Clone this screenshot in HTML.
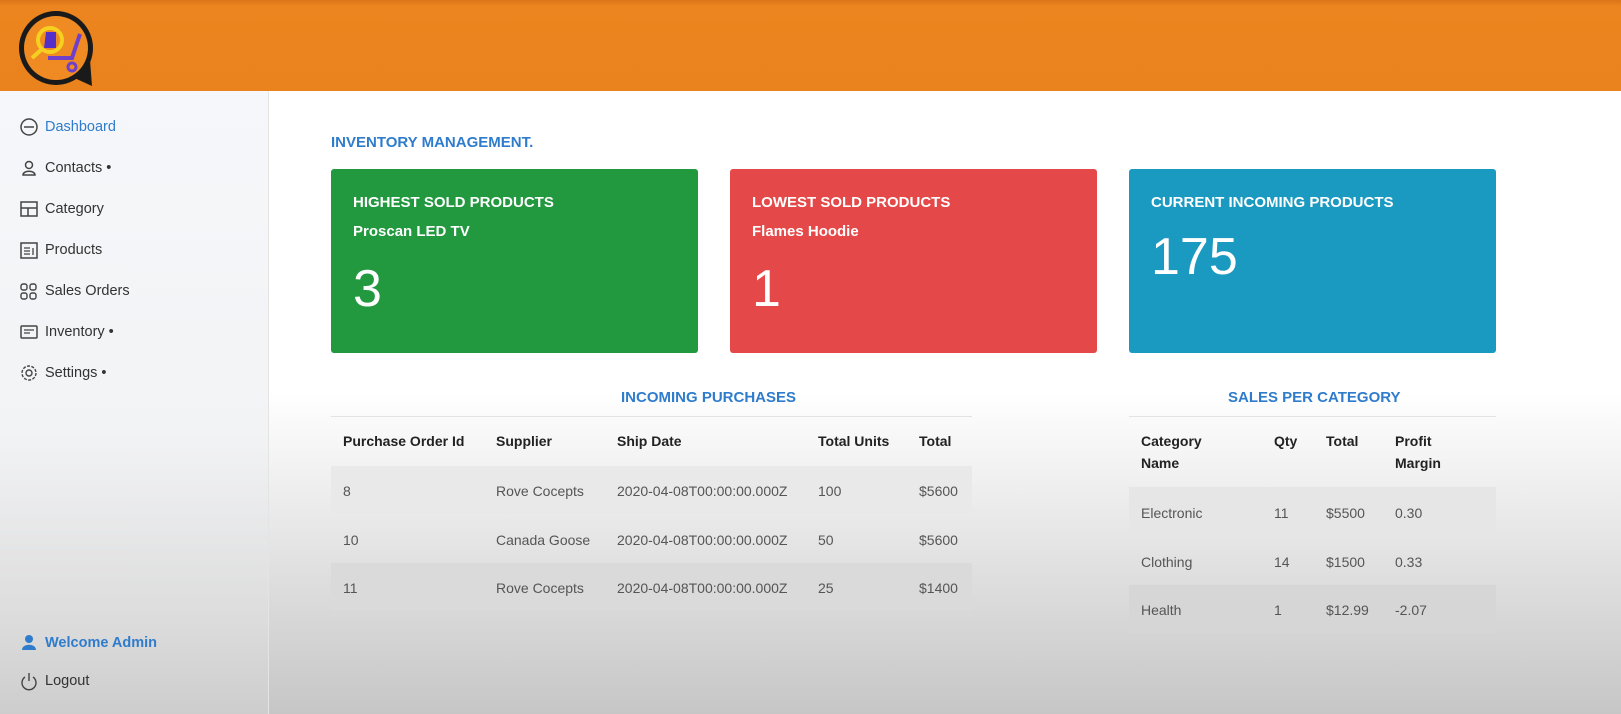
<!DOCTYPE html>
<html><head><meta charset="utf-8"><style>
*{margin:0;padding:0;box-sizing:border-box}
body{width:1621px;height:714px;overflow:hidden;font-family:"Liberation Sans",sans-serif;position:relative;background:linear-gradient(#fff 0%,#fff 55%,#e6e6e6 75%,#c6c6c6 100%)}
.hdr{position:absolute;left:0;top:0;width:1621px;height:91px;background:linear-gradient(#d97418 0,#ec841f 6px,#ea821d 100%)}
.side{position:absolute;left:0;top:91px;width:269px;height:623px;background:linear-gradient(#f5f7fa 0%,#f2f3f5 55%,#dcdcdc 85%,#cdcdcd 100%);border-right:1px solid #e4e4e4}
.nav{position:absolute;left:19px;font-size:14.5px;color:#333;display:flex;align-items:center;gap:6px}
.nav svg{width:20px;height:20px}
.t{position:absolute;font-size:14px;color:#222}
.card{position:absolute;top:169px;width:367px;height:184px;border-radius:3px;color:#fff}
.card .a{position:absolute;left:22px;top:25px;font-weight:bold;font-size:15px}
.card .b{position:absolute;left:22px;top:54px;font-weight:bold;font-size:15px}
.card .n{position:absolute;left:22px;font-size:52px;font-weight:300}
.row{position:absolute;height:48px}
.blue{color:#2f7ccc;font-weight:bold}
</style></head><body>
<div class="hdr">
<svg width="92" height="88" style="position:absolute;left:10px;top:4px" viewBox="0 0 92 88">
<path d="M60 72 L82 82 L80 56 Z" fill="#1a1a1a"/>
<circle cx="46" cy="44" r="37" fill="#1a1a1a"/>
<circle cx="46" cy="44" r="32" fill="#f08a22"/>
<circle cx="40" cy="36" r="12" fill="none" stroke="#f5d020" stroke-width="4"/>
<path d="M31 46 22 54" stroke="#f5d020" stroke-width="4"/>
<path d="M36 28h10v16h-12z" fill="#5530c8"/>
<path d="M38 54h24l8-24" stroke="#7040c8" stroke-width="4" fill="none"/>
<circle cx="62" cy="63" r="4" fill="none" stroke="#7040c8" stroke-width="3"/>
</svg>
</div>
<div class="side">
<div class="nav" style="top:26px;color:#2f7ccc"><svg viewBox="0 0 20 20"><circle cx="10" cy="10" r="8" fill="none" stroke="#444" stroke-width="1.5"/><path d="M5 10h10" stroke="#444" stroke-width="1.5"/></svg>Dashboard</div>
<div class="nav" style="top:67px"><svg viewBox="0 0 20 20"><circle cx="10" cy="7" r="3.5" fill="none" stroke="#444" stroke-width="1.5"/><path d="M4 17c0-5 12-5 12 0z" fill="none" stroke="#444" stroke-width="1.5"/></svg>Contacts •</div>
<div class="nav" style="top:108px"><svg viewBox="0 0 20 20"><rect x="2" y="3" width="16" height="14" fill="none" stroke="#444" stroke-width="1.5"/><path d="M2 9h16M9 9v8" stroke="#444" stroke-width="1.5"/></svg>Category</div>
<div class="nav" style="top:149px"><svg viewBox="0 0 20 20"><rect x="2" y="3" width="16" height="15" fill="none" stroke="#444" stroke-width="1.5"/><path d="M5 8h6M5 11h6M5 14h6M14 8v7" stroke="#444" stroke-width="1.3"/></svg>Products</div>
<div class="nav" style="top:190px"><svg viewBox="0 0 20 20"><rect x="2" y="3" width="6" height="6" rx="2" fill="none" stroke="#444" stroke-width="1.4"/><rect x="11" y="3" width="6" height="6" rx="2" fill="none" stroke="#444" stroke-width="1.4"/><rect x="2" y="12" width="6" height="6" rx="2" fill="none" stroke="#444" stroke-width="1.4"/><rect x="11" y="12" width="6" height="6" rx="2" fill="none" stroke="#444" stroke-width="1.4"/></svg>Sales Orders</div>
<div class="nav" style="top:231px"><svg viewBox="0 0 20 20"><rect x="2" y="4" width="16" height="12" rx="1" fill="none" stroke="#444" stroke-width="1.5"/><path d="M5 8h10M5 11h6" stroke="#444" stroke-width="1.3"/></svg>Inventory •</div>
<div class="nav" style="top:272px"><svg viewBox="0 0 20 20"><circle cx="10" cy="10" r="3" fill="none" stroke="#444" stroke-width="1.4"/><circle cx="10" cy="10" r="7" fill="none" stroke="#444" stroke-width="1.4" stroke-dasharray="3 1.4"/></svg>Settings •</div>
<div class="nav" style="top:542px;color:#2f7ccc;font-weight:bold"><svg viewBox="0 0 20 20"><circle cx="10" cy="6" r="4" fill="#2f7ccc"/><path d="M3 17c0-7 14-7 14 0z" fill="#2f7ccc"/></svg>Welcome Admin</div>
<div class="nav" style="top:580px"><svg viewBox="0 0 20 20"><path d="M6 6a7 7 0 1 0 8 0" fill="none" stroke="#444" stroke-width="1.4"/><path d="M10 2v8" stroke="#444" stroke-width="1.4"/></svg>Logout</div>
</div>

<div class="t blue" style="left:331px;top:134px;font-size:15px">INVENTORY MANAGEMENT.</div>
<div class="card" style="left:331px;background:#22983f"><div class="a">HIGHEST SOLD PRODUCTS</div><div class="b">Proscan LED TV</div><div class="n" style="top:90px">3</div></div>
<div class="card" style="left:730px;background:#e54848"><div class="a">LOWEST SOLD PRODUCTS</div><div class="b">Flames Hoodie</div><div class="n" style="top:90px">1</div></div>
<div class="card" style="left:1129px;background:#1a9ac0"><div class="a">CURRENT INCOMING PRODUCTS</div><div class="n" style="top:58px">175</div></div>

<div class="t blue" style="left:621px;top:389px;font-size:15px">INCOMING PURCHASES</div>
<div style="position:absolute;left:331px;top:416px;width:641px;border-top:1px solid #e3e3e3"></div>
<div class="row" style="left:331px;top:466px;width:641px;background:#e9e9e9"></div>
<div class="row" style="left:331px;top:563px;width:641px;background:#dadada"></div>
<div class="t" style="left:343px;top:433px;font-weight:bold">Purchase Order Id</div>
<div class="t" style="left:496px;top:433px;font-weight:bold">Supplier</div>
<div class="t" style="left:617px;top:433px;font-weight:bold">Ship Date</div>
<div class="t" style="left:818px;top:433px;font-weight:bold">Total Units</div>
<div class="t" style="left:919px;top:433px;font-weight:bold">Total</div>
<div class="t" style="left:343px;top:483px;color:#555">8</div><div class="t" style="left:496px;top:483px;color:#555">Rove Cocepts</div><div class="t" style="left:617px;top:483px;color:#555">2020-04-08T00:00:00.000Z</div><div class="t" style="left:818px;top:483px;color:#555">100</div><div class="t" style="left:919px;top:483px;color:#555">$5600</div>
<div class="t" style="left:343px;top:532px;color:#555">10</div><div class="t" style="left:496px;top:532px;color:#555">Canada Goose</div><div class="t" style="left:617px;top:532px;color:#555">2020-04-08T00:00:00.000Z</div><div class="t" style="left:818px;top:532px;color:#555">50</div><div class="t" style="left:919px;top:532px;color:#555">$5600</div>
<div class="t" style="left:343px;top:580px;color:#555">11</div><div class="t" style="left:496px;top:580px;color:#555">Rove Cocepts</div><div class="t" style="left:617px;top:580px;color:#555">2020-04-08T00:00:00.000Z</div><div class="t" style="left:818px;top:580px;color:#555">25</div><div class="t" style="left:919px;top:580px;color:#555">$1400</div>

<div class="t blue" style="left:1228px;top:389px;font-size:15px">SALES PER CATEGORY</div>
<div style="position:absolute;left:1129px;top:416px;width:367px;border-top:1px solid #e3e3e3"></div>
<div class="row" style="left:1129px;top:487px;width:367px;background:#e6e6e6"></div>
<div class="row" style="left:1129px;top:585px;width:367px;background:#d6d6d6;height:49px"></div>
<div class="t" style="left:1141px;top:430px;font-weight:bold;line-height:22px">Category<br>Name</div>
<div class="t" style="left:1274px;top:430px;font-weight:bold;line-height:22px">Qty</div>
<div class="t" style="left:1326px;top:430px;font-weight:bold;line-height:22px">Total</div>
<div class="t" style="left:1395px;top:430px;font-weight:bold;line-height:22px">Profit<br>Margin</div>
<div class="t" style="left:1141px;top:505px;color:#555">Electronic</div><div class="t" style="left:1274px;top:505px;color:#555">11</div><div class="t" style="left:1326px;top:505px;color:#555">$5500</div><div class="t" style="left:1395px;top:505px;color:#555">0.30</div>
<div class="t" style="left:1141px;top:554px;color:#555">Clothing</div><div class="t" style="left:1274px;top:554px;color:#555">14</div><div class="t" style="left:1326px;top:554px;color:#555">$1500</div><div class="t" style="left:1395px;top:554px;color:#555">0.33</div>
<div class="t" style="left:1141px;top:602px;color:#555">Health</div><div class="t" style="left:1274px;top:602px;color:#555">1</div><div class="t" style="left:1326px;top:602px;color:#555">$12.99</div><div class="t" style="left:1395px;top:602px;color:#555">-2.07</div>
</body></html>
